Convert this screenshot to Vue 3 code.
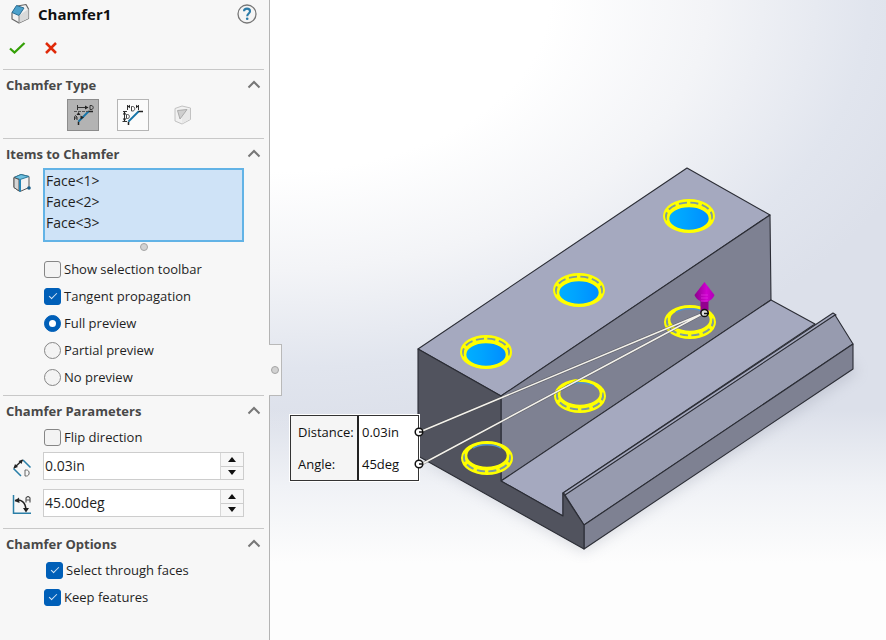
<script setup>
import { ref } from 'vue'

const faces = ['Face<1>', 'Face<2>', 'Face<3>']
const chamferType = ref('angle')
const showToolbar = ref(false)
const tangent = ref(true)
const preview = ref('full')
const flip = ref(false)
const throughFaces = ref(true)
const keepFeatures = ref(true)
const distance = ref('0.03in')
const angle = ref('45.00deg')

const open = ref({ type: true, items: true, params: true, options: true })
const previews = [
  { value: 'full', label: 'Full preview' },
  { value: 'partial', label: 'Partial preview' },
  { value: 'none', label: 'No preview' },
]

function stepDistance(by) {
  distance.value = Math.max(0, parseFloat(distance.value) + by).toFixed(2) + 'in'
}
function stepAngle(by) {
  angle.value = Math.max(0, parseFloat(angle.value) + by).toFixed(2) + 'deg'
}

const topHoles = [[419, 216], [309, 290], [216, 352]]
const bottomHoles = [[420, 322], [310, 396], [217, 458]]
</script>

<template>
  <div class="app">
    <aside class="panel">
      <header class="title-row">
        <svg class="feature-icon" width="20" height="22" viewBox="0 0 20 22" aria-hidden="true">
          <path d="M2 10 7.500 3 16 1.500 18.500 6V15.500L9 20 2 16Z" fill="#f1f1f1" stroke="#666" stroke-width="1.200" stroke-linejoin="round" />
          <path d="M9 12.500 18.500 6V15.500L9 20Z" fill="#d9d9d9" />
          <path d="M2 9.500 6.500 2.500 14 5 9 12.500Z" fill="#4ba1cc" stroke="#2b6d92" stroke-linejoin="round" />
          <path d="M9 12.500V20" stroke="#888" />
        </svg>
        <h1>Chamfer1</h1>
        <button class="help" type="button" aria-label="Help">
          <svg width="20" height="20" viewBox="0 0 20 20" aria-hidden="true">
            <circle cx="10" cy="10" r="9" fill="#f5f5f5" stroke="#777" stroke-width="1.300" />
            <path d="M7 7.200C7.100 3.700 13 3.800 13 7.200 13 9.500 10.200 9.500 10.200 12.200" fill="none" stroke="#2b7ba8" stroke-width="2.100" />
            <circle cx="10.200" cy="14.800" r="1.300" fill="#2b7ba8" />
          </svg>
        </button>
      </header>

      <div class="actions">
        <button type="button" aria-label="OK">
          <svg width="18" height="14" viewBox="0 0 18 14" aria-hidden="true">
            <path d="M2 7.500 6.500 11.500 16.500 2" fill="none" stroke="#35a007" stroke-width="2.300" />
          </svg>
        </button>
        <button type="button" aria-label="Cancel">
          <svg width="14" height="14" viewBox="0 0 14 14" aria-hidden="true">
            <path d="M2 2 12 12M12 2 2 12" fill="none" stroke="#e02a0a" stroke-width="2.500" />
          </svg>
        </button>
      </div>

      <section class="group type-group">
        <h2>
          <button type="button" class="group-head" :aria-expanded="open.type" @click="open.type = !open.type">
            <span>Chamfer Type</span>
            <svg width="14" height="9" viewBox="0 0 14 9" aria-hidden="true"><path d="M1.500 7.500 7 2 12.500 7.500" /></svg>
          </button>
        </h2>
        <div v-if="open.type" class="types">
          <button type="button" class="type" :class="{ on: chamferType === 'angle' }" aria-label="Angle distance" @click="chamferType = 'angle'">
            <svg width="30" height="30" viewBox="0 0 30 30" aria-hidden="true">
              <path d="M10.500 25V21.500M20 11.500H25" fill="none" stroke="#222" stroke-width="1.500" />
              <path d="M10.500 21.500 20.500 11.500" stroke="#1674a8" stroke-width="1.800" />
              <path d="M6 11.500H20" stroke="#555" stroke-dasharray="3 1" />
              <path d="M9.500 5V10M9.500 7.500H20" fill="none" stroke="#333" />
              <path d="M20.500 7.500 17 5.500V9.500ZM10.500 12 12.500 15H8.500ZM16 17.500 12.500 15.500V19.500Z" fill="#222" />
              <path d="M22 5.500H23C26 5.500 26 9.500 23 9.500H22Z" fill="none" stroke="#333" />
              <path d="M6.500 20V17L7.500 15.500 9 17V20M6.500 18H9" fill="none" stroke="#333" />
            </svg>
          </button>
          <button type="button" class="type" :class="{ on: chamferType === 'distance' }" aria-label="Distance distance" @click="chamferType = 'distance'">
            <svg width="30" height="30" viewBox="0 0 30 30" aria-hidden="true">
              <path d="M10.500 25V21.500M20 11.500H25" fill="none" stroke="#222" stroke-width="1.500" />
              <path d="M10.500 21.500 20.500 11.500" stroke="#1674a8" stroke-width="1.800" />
              <path d="M9.500 5V10M20.500 5V10M9.500 6.500H12M18 6.500H20M5 11.500H9M6.500 12V21M4.500 21.500H9" stroke="#333" />
              <path d="M9.500 6.500 12 4.800V8.200ZM20.500 6.500 18 4.800V8.200ZM6.500 11.500 8.200 14.500H4.800ZM6.500 21.500 8.200 18.500H4.800Z" fill="#222" />
              <path d="M13.500 6.500H14.500C17.500 6.500 17.500 11 14.500 11H13.500ZM8.500 14.500H9.500C12 14.500 12 18.500 9.500 18.500H8.500Z" fill="#fff" stroke="#444" />
            </svg>
          </button>
          <button type="button" class="type flat" disabled aria-label="Vertex">
            <svg width="30" height="30" viewBox="0 0 30 30" aria-hidden="true">
              <path d="M7 8.500 14 6 22.500 8V19.500L14 24 7 21Z" fill="#f1f1f1" stroke="#c2c2c2" stroke-linejoin="round" />
              <path d="M14 12 22 8.500V19L14 23.500Z" fill="#e8e8e8" />
              <path d="M9.500 10.500 19 9.500 12 19Z" fill="#cfcfcf" stroke="#ababab" stroke-linejoin="round" />
            </svg>
          </button>
        </div>
      </section>

      <section class="group items-group">
        <h2>
          <button type="button" class="group-head" :aria-expanded="open.items" @click="open.items = !open.items">
            <span>Items to Chamfer</span>
            <svg width="14" height="9" viewBox="0 0 14 9" aria-hidden="true"><path d="M1.500 7.500 7 2 12.500 7.500" /></svg>
          </button>
        </h2>
        <div v-if="open.items">
          <div class="field">
            <svg class="field-icon" width="20" height="20" viewBox="0 0 20 20" aria-hidden="true">
              <path d="M2 4.500 9 1.500 17 3.500V14.500L8 18.500 2 14.500Z" fill="#f2f2f2" stroke="#555" stroke-linejoin="round" />
              <path d="M2 4.500 9 1.500 17 3.500 8 6.500Z" fill="#6dc0e0" stroke="#2c789a" stroke-linejoin="round" />
              <path d="M2 4.500 7 6.500V18L2 14.500Z" fill="#d6d6d6" stroke="#555" />
              <path d="M8 6.500V18.500" stroke="#2484b5" stroke-width="2" />
              <circle cx="17" cy="15" r="1.800" fill="#1d5f8a" />
            </svg>
            <ul class="selection" aria-label="Selected faces">
              <li v-for="face in faces" :key="face">{{ face }}</li>
            </ul>
          </div>
          <div class="grip-row"><span class="knob"></span></div>
          <div class="checks">
            <label class="check"><input v-model="showToolbar" type="checkbox" />Show selection toolbar</label>
            <label class="check"><input v-model="tangent" type="checkbox" />Tangent propagation</label>
            <label v-for="p in previews" :key="p.value" class="check">
              <input v-model="preview" type="radio" name="preview" :value="p.value" />{{ p.label }}
            </label>
          </div>
        </div>
      </section>

      <section class="group params-group">
        <h2>
          <button type="button" class="group-head" :aria-expanded="open.params" @click="open.params = !open.params">
            <span>Chamfer Parameters</span>
            <svg width="14" height="9" viewBox="0 0 14 9" aria-hidden="true"><path d="M1.500 7.500 7 2 12.500 7.500" /></svg>
          </button>
        </h2>
        <div v-if="open.params">
          <div class="checks">
            <label class="check"><input v-model="flip" type="checkbox" />Flip direction</label>
          </div>
          <div class="spinners">
            <div class="field">
              <svg class="field-icon" width="20" height="20" viewBox="0 0 20 20" aria-hidden="true">
                <path d="M9 19 1.500 11.500M11 3 18.500 10.500" stroke="#2a7fa8" stroke-width="1.500" />
                <path d="M2 11 10.500 3" stroke="#222" stroke-width="1.300" />
                <path d="M1.500 11.500 3 7 6 10ZM11 2.500 9.500 7 6.500 4Z" fill="#222" />
                <path d="M13 13H14.500C18 13 18 19 14.500 19H13Z" fill="none" stroke="#666" />
              </svg>
              <div class="spin">
                <input v-model="distance" type="text" aria-label="Distance" />
                <div class="steps">
                  <button type="button" aria-label="Increase distance" @click="stepDistance(0.01)"><svg width="8" height="5" viewBox="0 0 8 5"><path d="M0 5 4 0 8 5Z" /></svg></button>
                  <button type="button" aria-label="Decrease distance" @click="stepDistance(-0.01)"><svg width="8" height="5" viewBox="0 0 8 5"><path d="M0 0H8L4 5Z" /></svg></button>
                </div>
              </div>
            </div>
            <div class="field">
              <svg class="field-icon" width="20" height="20" viewBox="0 0 20 20" aria-hidden="true">
                <path d="M1.500 1V19.200H19" fill="none" stroke="#2a7fa8" stroke-width="1.500" />
                <path d="M3 6.500C9 5 13.500 8 14 16" fill="none" stroke="#222" stroke-width="1.500" />
                <path d="M2.500 7 7 3.500 7.500 9ZM14 18.500 11 14H17Z" fill="#222" />
                <path d="M14 8.500V4L15.500 2.500H16.500L18 4V8.500M14 6H18" fill="none" stroke="#555" stroke-width="1.200" />
              </svg>
              <div class="spin">
                <input v-model="angle" type="text" aria-label="Angle" />
                <div class="steps">
                  <button type="button" aria-label="Increase angle" @click="stepAngle(1)"><svg width="8" height="5" viewBox="0 0 8 5"><path d="M0 5 4 0 8 5Z" /></svg></button>
                  <button type="button" aria-label="Decrease angle" @click="stepAngle(-1)"><svg width="8" height="5" viewBox="0 0 8 5"><path d="M0 0H8L4 5Z" /></svg></button>
                </div>
              </div>
            </div>
          </div>
        </div>
      </section>

      <section class="group">
        <h2>
          <button type="button" class="group-head" :aria-expanded="open.options" @click="open.options = !open.options">
            <span>Chamfer Options</span>
            <svg width="14" height="9" viewBox="0 0 14 9" aria-hidden="true"><path d="M1.500 7.500 7 2 12.500 7.500" /></svg>
          </button>
        </h2>
        <div v-if="open.options" class="checks">
          <label class="check nested"><input v-model="throughFaces" type="checkbox" />Select through faces</label>
          <label class="check"><input v-model="keepFeatures" type="checkbox" />Keep features</label>
        </div>
      </section>

      <div class="handle"><span class="knob"></span></div>
    </aside>

    <main class="viewport">
      <svg class="model" width="616" height="640" viewBox="0 0 616 640" role="img" aria-label="Chamfer preview on the part">
        <defs>
          <linearGradient id="bore" x1="0" x2="1">
            <stop offset="0" stop-color="#00b0ff" />
            <stop offset="0.400" stop-color="#00a4ff" />
            <stop offset="1" stop-color="#008cff" />
          </linearGradient>
          <linearGradient id="cone" x1="0" x2="1">
            <stop offset="0" stop-color="#8a008a" />
            <stop offset="0.600" stop-color="#d000d0" />
            <stop offset="1" stop-color="#b000b4" />
          </linearGradient>
          <filter id="soft" x="-10%" y="-10%" width="120%" height="120%"><feGaussianBlur stdDeviation="7" /></filter>
        </defs>

        <path d="M150 458 314 552 588 372 560 340 300 480Z" fill="#8d92a3" opacity="0.300" filter="url(#soft)" />

        <g stroke="#2b2d35" stroke-width="1.100" stroke-linejoin="round">
          <path d="M148 349 417 168 500 215 231 396Z" fill="#a5a9bf" />
          <path d="M231 396 500 215 501 300 231 481Z" fill="#7e8192" />
          <path d="M231 481 501 300 545 324 293 493V516Z" fill="#a5a9bf" />
          <path d="M293 493 563 313 566 315 296 495Z" fill="#a5a9bf" />
          <path d="M295 495 565 315 583 344 314 525Z" fill="#979baf" />
          <path d="M314 525 583 344V369L314 549Z" fill="#7e8192" />
          <path d="M148 349 231 396V481L293 516V493L314 525V549L148 456Z" fill="#51535e" />
        </g>

        <g v-for="[x, y] in topHoles" :key="'t' + x" fill="none">
          <ellipse :cx="x" :cy="y" rx="24.500" ry="15.500" fill="#ff0" stroke="#ff0" stroke-width="3" />
          <path :d="`M${x - 22} ${y + 4}A23 13.500 0 1 1 ${x + 22} ${y + 4}`" stroke="#7d9c9c" stroke-width="1.900" stroke-dasharray="8 3.500" />
          <ellipse :cx="x" :cy="y + 2.500" rx="21" ry="12.500" fill="url(#bore)" stroke="#ff0" stroke-width="2.600" />
        </g>

        <g v-for="[x, y] in bottomHoles" :key="'b' + x" fill="none">
          <ellipse :cx="x" :cy="y" rx="24.500" ry="15.500" fill="#ff0" stroke="#ff0" stroke-width="3" />
          <path :d="`M${x - 22} ${y - 4}A23 13.500 0 1 0 ${x + 22} ${y - 4}`" stroke="#7d9c9c" stroke-width="1.900" stroke-dasharray="8 3.500" />
          <ellipse :cx="x" :cy="y - 2.500" rx="21" ry="12.500" :fill="x < 231 ? '#51535e' : '#7e8192'" stroke="#ff0" stroke-width="2.600" />
          <path :d="`M${x - 14} ${y - 10}A20 11.500 0 0 1 ${x + 14} ${y - 10}`" stroke="#4f93cf" stroke-width="1.500" />
        </g>

        <path d="M430.500 298H438.500V313H430.500Z" fill="#94008f" />
        <path d="M434.500 282 444.500 295C443 299 439 302 434.500 302S426 299 424.500 295Z" fill="url(#cone)" />
        <path d="M431 295H438M431 298H438M431 301H438" stroke="#e63be6" opacity="0.600" />

        <g fill="none">
          <path d="M152 431 434 313M152 464 434 313" stroke="#444" stroke-width="2.600" opacity="0.500" />
          <path d="M152 431 434 313M152 464 434 313" stroke="#f4f2ec" stroke-width="1.500" />
          <circle cx="434.500" cy="313" r="3.600" fill="#ddd" stroke="#111" stroke-width="1.500" />
          <path d="M434 313.500H439" stroke="#111" stroke-width="1.500" />
        </g>
      </svg>

      <dl class="callout">
        <dt>Distance:</dt>
        <dd>0.03in<svg class="node" width="10" height="10" viewBox="0 0 10 10" aria-hidden="true"><circle cx="5" cy="5" r="3.800" /><path d="M5 5H9" /></svg></dd>
        <dt>Angle:</dt>
        <dd>45deg<svg class="node" width="10" height="10" viewBox="0 0 10 10" aria-hidden="true"><circle cx="5" cy="5" r="3.800" /><path d="M5 5H9" /></svg></dd>
      </dl>
    </main>
  </div>
</template>

<style>
body {
  margin: 0;
}
</style>

<style scoped>
.app {
  display: flex;
  min-height: 100vh;
  font-family: "Open Sans", "Noto Sans", sans-serif;
  font-size: 13px;
  color: #1f1f1f;
}
button {
  padding: 0;
  border: 0;
  background: none;
  font: inherit;
  color: inherit;
}
svg {
  display: block;
}
.panel {
  position: relative;
  z-index: 1;
  box-sizing: border-box;
  flex: 0 0 270px;
  min-width: 0;
  background: #f7f7f7;
  border-right: 1px solid #b4b4b4;
}
.title-row {
  display: flex;
  align-items: center;
  height: 28px;
  padding: 0 12px 0 10px;
}
h1 {
  flex: 1;
  margin: 0 0 0 8px;
  font-size: 15px;
  font-weight: 700;
  line-height: 20px;
  color: #111;
}
.actions {
  display: flex;
  align-items: center;
  gap: 18px;
  height: 39px;
  padding: 0 0 2px 8px;
}
.group {
  margin: 0 5px 0 3px;
  border-top: 1px solid #c8c8c8;
}
.type-group {
  padding-bottom: 7px;
}
.items-group {
  padding-bottom: 6px;
}
.params-group {
  padding-bottom: 11px;
}
h2 {
  margin: 0;
  font-size: 13px;
}
.group-head {
  display: flex;
  align-items: center;
  justify-content: space-between;
  width: 100%;
  height: 29px;
  padding: 1px 3px 0;
  font-size: 13px;
  font-weight: 700;
  color: #484848;
}
.group-head svg {
  margin-bottom: 2px;
  fill: none;
  stroke: #777;
  stroke-width: 2;
}
.types {
  display: flex;
  gap: 18px;
  padding-left: 64px;
}
.type {
  box-sizing: border-box;
  width: 32px;
  height: 32px;
  border: 1px solid #b5b5b5;
  background: #fbfbfb;
}
.type.on {
  background: #b3b3b3;
  border-color: #8c8c8c;
}
.type.flat {
  border-color: transparent;
  background: none;
}
.field {
  display: flex;
  gap: 11px;
  padding: 0 20px 0 9px;
}
.field-icon {
  flex: none;
  margin-top: 5px;
}
.selection {
  box-sizing: border-box;
  flex: 1;
  height: 74px;
  margin: 0;
  padding: 0 0 0 1px;
  list-style: none;
  font-size: 14px;
  line-height: 21px;
  border: 2px solid #62b3e6;
  background: #cfe3f7;
}
.grip-row {
  display: flex;
  justify-content: center;
  height: 13px;
  padding: 1px 0 1px 21px;
}
.knob {
  box-sizing: border-box;
  width: 8px;
  height: 8px;
  border: 1px solid #a5a5a5;
  border-radius: 50%;
  background: #d2d2d2;
}
.checks {
  display: flex;
  flex-direction: column;
  gap: 3px;
  padding-left: 41px;
}
.check {
  display: flex;
  align-items: center;
  gap: 3px;
  height: 24px;
}
.check.nested {
  margin-left: 2px;
}
.check input {
  appearance: none;
  box-sizing: border-box;
  display: flex;
  align-items: center;
  justify-content: center;
  width: 17px;
  height: 17px;
  margin: 0;
  border: 1px solid #868686;
  border-radius: 3px;
  background: #f3f3f3;
}
.check input[type="radio"] {
  border-radius: 50%;
}
.check input:checked {
  border-color: #005fb8;
  background: #005fb8;
}
.check input[type="checkbox"]:checked::after {
  content: "";
  width: 7px;
  height: 3px;
  margin-bottom: 3px;
  border: solid #d6e6f5;
  border-width: 0 0 1px 1px;
  transform: rotate(-45deg);
}
.check input[type="radio"]:checked::after {
  content: "";
  width: 7px;
  height: 7px;
  border-radius: 50%;
  background: #fff;
}
.spinners {
  display: flex;
  flex-direction: column;
  gap: 9px;
  padding-top: 3px;
}
.spin {
  box-sizing: border-box;
  display: flex;
  flex: 1;
  min-width: 0;
  height: 28px;
  border: 1px solid #cdcdcd;
  background: #fff;
}
.spin input {
  flex: 1;
  min-width: 0;
  padding: 0 0 2px 1px;
  border: 0;
  outline: 0;
  background: none;
  font: inherit;
  font-size: 14px;
  color: inherit;
}
.steps {
  display: flex;
  flex-direction: column;
  width: 22px;
  background: #f7f7f7;
  border-left: 1px solid #d8d8d8;
}
.steps button {
  display: flex;
  flex: 1;
  align-items: center;
  justify-content: center;
}
.steps button + button {
  border-top: 1px solid #cdcdcd;
}
.steps svg {
  fill: #111;
}
.handle {
  position: absolute;
  top: 344px;
  right: -13px;
  box-sizing: border-box;
  display: flex;
  align-items: center;
  justify-content: center;
  width: 13px;
  height: 52px;
  border: 1px solid #b9b9b9;
  border-left: 0;
  background: #f7f7f7;
}
.viewport {
  position: relative;
  flex: 1;
  min-width: 0;
  overflow: hidden;
  background:
    linear-gradient(to bottom, transparent 64%, #fafbfcaa 76%, #fdfdfd 88%),
    radial-gradient(108% 64% at 0 0, #fff 42%, #f3f4f7 66%, #e1e5ee 90%, #dce0ea 105%);
}
.model {
  overflow: visible;
}
.callout {
  position: absolute;
  left: 20px;
  top: 415px;
  box-sizing: border-box;
  display: grid;
  grid-template-columns: 68px 59px;
  margin: 0;
  border: 1px solid #333;
  outline: 1px solid #fff;
  line-height: 32px;
  color: #111;
  background: #fff;
}
.callout dt {
  padding-left: 7px;
  border-right: 2px solid #222;
  background: #f5f5f5;
}
.callout dd {
  position: relative;
  margin: 0;
  padding-left: 3px;
}
.node {
  position: absolute;
  right: -6px;
  top: 11px;
  fill: #fff;
  stroke: #111;
  stroke-width: 1.5;
}
</style>
